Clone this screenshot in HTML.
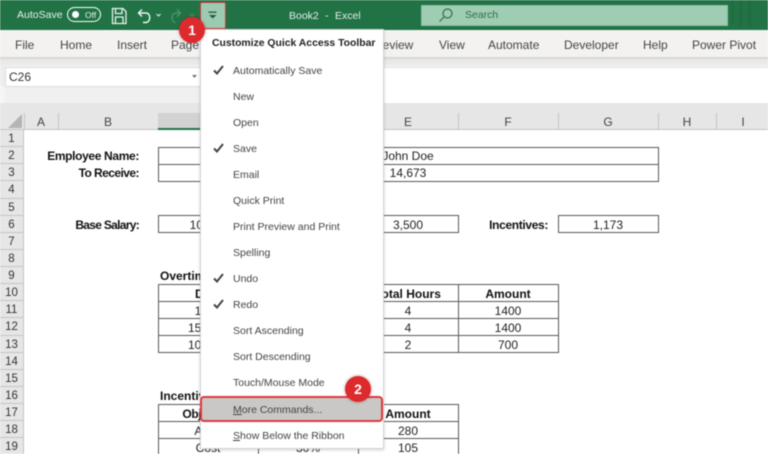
<!DOCTYPE html>
<html><head><meta charset="utf-8">
<style>
*{box-sizing:border-box}
html,body{margin:0;padding:0;width:768px;height:454px;overflow:hidden;background:#fff}
body{font-family:"Liberation Sans",sans-serif;position:relative}
#w{position:absolute;left:0;top:0;width:768px;height:454px;overflow:hidden;filter:blur(.45px)}
.a,.a *{position:absolute}
.t{position:absolute;white-space:nowrap;line-height:16px}
.rb{font-size:12px;color:#444;top:37px}
.h{top:114px;font-size:12px;color:#444;width:40px;text-align:center}
.r{position:absolute;left:0;width:24px;height:17.13px;background:#e6e6e6;border-bottom:1px solid #c4c4c4;border-right:1px solid #c4c4c4;font-size:11.5px;color:#333;text-align:center;line-height:18px}
.l{position:absolute;background:#5a5a5a}
.c{font-size:12px;color:#222;text-align:center;position:absolute;line-height:19px;white-space:nowrap}
.b{font-weight:bold;color:#111}
.lb{letter-spacing:-.35px}
.m{position:absolute;left:233px;font-size:10.5px;color:#444;line-height:16px;white-space:nowrap;top:0}
.k{position:absolute;left:212px;width:12px;height:12px}
.n{position:absolute;width:26px;height:26px;border-radius:50%;background:#dc2a2d;color:#fff;font:bold 14px/26px "Liberation Sans",sans-serif;text-align:center;box-shadow:0 0 3px rgba(120,0,0,.4)}
</style></head><body><div id="w">
<!-- title bar -->
<div style="position:absolute;left:0;top:0;width:768px;height:30px;background:#217346"></div>
<div class="t" style="left:17px;top:7px;font-size:10.5px;color:#e6f0ea">AutoSave</div>
<div style="position:absolute;left:67px;top:7px;width:34px;height:15px;border:1px solid #fff;border-radius:8px"></div>
<div style="position:absolute;left:72px;top:11px;width:7px;height:7px;border-radius:50%;background:#fff"></div>
<div class="t" style="left:85px;top:7px;font-size:8.5px;color:#e6f0ea">Off</div>
<svg style="position:absolute;left:0;top:0" width="240" height="30" fill="none">
<path d="M112.500 8.500H123L126 11.500V23.500H112.500Z M115.500 8.500V13.500H122V8.500 M115.500 23.500V17H123V23.500" stroke="#e8f1ec" stroke-width="1.300"/>
<path d="M142 9.500L138.500 13L142 16.500 M139 13H146C151 13 151 22 146 22.500H143" stroke="#f0f6f2" stroke-width="1.400"/>
<path d="M156.500 14L158.500 16L160.500 14" stroke="#e8f1ec" stroke-width="1"/>
<path d="M177 9.500L180.500 13L177 16.500 M180 13H176C171 13 171 21 175 22.500" stroke="#56926f" stroke-width="1.300"/>
<path d="M190 14L192 16L194 14" stroke="#56926f" stroke-width="1"/>
</svg>
<div style="position:absolute;left:200px;top:2px;width:26px;height:27px;background:#9dcbb1;border:1.500px solid #d8363a;border-radius:2px"></div>
<svg style="position:absolute;left:207px;top:10px" width="12" height="10"><rect x="1.500" y="1.500" width="8" height="1.300" fill="#1f5c3a"/><path d="M2 5H9.500L5.700 8.500Z" fill="#1f5c3a"/></svg>
<div class="t" style="left:289px;top:8px;font-size:10.5px;color:#e6f0ea">Book2</div>
<div class="t" style="left:325px;top:8px;font-size:10.5px;color:#e6f0ea">-</div>
<div class="t" style="left:335px;top:8px;font-size:10.5px;color:#e6f0ea">Excel</div>
<div style="position:absolute;left:421px;top:5px;width:307px;height:21px;background:#9fcdb3;border:1px solid #8cbfa3"></div>
<svg style="position:absolute;left:438px;top:7px" width="16" height="16" fill="none"><circle cx="9.500" cy="6.500" r="4.500" stroke="#2d6e4b" stroke-width="1.200"/><path d="M6 10L1.500 14.500" stroke="#2d6e4b" stroke-width="1.200"/></svg>
<div class="t" style="left:465px;top:7px;font-size:10.5px;color:#2f6e4c">Search</div>
<div style="position:absolute;left:731px;top:0;width:3px;height:24px;background:#1f6c41"></div>
<div style="position:absolute;left:739px;top:0;width:3px;height:27px;background:#1f6c41"></div>
<div style="position:absolute;left:748px;top:0;width:3px;height:27px;background:#1f6c41"></div>

<!-- ribbon -->
<div style="position:absolute;left:0;top:30px;width:768px;height:27px;background:#f3f2f1"></div>
<div style="position:absolute;left:0;top:57px;width:768px;height:9px;background:linear-gradient(#d2d1d0,#e9e8e7 35%,#eeeded)"></div>
<div class="t rb" style="left:15px">File</div>
<div class="t rb" style="left:60px">Home</div>
<div class="t rb" style="left:117px">Insert</div>
<div class="t rb" style="left:171px">Page Layout</div>
<div class="t rb" style="left:374px">Review</div>
<div class="t rb" style="left:439px">View</div>
<div class="t rb" style="left:488px">Automate</div>
<div class="t rb" style="left:564px">Developer</div>
<div class="t rb" style="left:643px">Help</div>
<div class="t rb" style="left:692px">Power Pivot</div>

<!-- formula bar -->
<div style="position:absolute;left:0;top:66px;width:768px;height:37px;background:#f5f5f5"></div>
<div style="position:absolute;left:5px;top:67px;width:763px;height:36px;background:#fff;border-top:1px solid #e2e2e2"></div>
<div style="position:absolute;left:0;top:66px;width:5px;height:20px;background:#eeeded"></div>
<div style="position:absolute;left:5px;top:67px;width:196px;height:20px;background:#fff;border:1px solid #dcdcdc"></div>
<div style="position:absolute;left:5px;top:87px;width:196px;height:16px;background:#f0f0f0"></div>
<div class="t" style="left:9px;top:69px;font-size:12px;color:#333">C26</div>
<svg style="position:absolute;left:192px;top:75px" width="6" height="4"><path d="M0 0H5L2.500 3Z" fill="#777"/></svg>

<!-- column headers -->
<div style="position:absolute;left:0;top:103px;width:768px;height:27px;background:#e6e6e6"></div>
<div style="position:absolute;left:0;top:129px;width:768px;height:1px;background:#c4c4c4"></div>
<svg style="position:absolute;left:8px;top:114px" width="14" height="14"><path d="M14 0V14H0Z" fill="#b5b5b5"/></svg>
<div style="position:absolute;left:158px;top:113px;width:100px;height:17px;background:#d2d2d2;border-bottom:2px solid #217346"></div>
<div class="l" style="left:24px;top:113px;width:1px;height:17px;background:#c4c4c4"></div>
<div class="l" style="left:58px;top:113px;width:1px;height:17px;background:#c4c4c4"></div>
<div class="l" style="left:458px;top:113px;width:1px;height:17px;background:#c4c4c4"></div>
<div class="l" style="left:558px;top:113px;width:1px;height:17px;background:#c4c4c4"></div>
<div class="l" style="left:658px;top:113px;width:1px;height:17px;background:#c4c4c4"></div>
<div class="l" style="left:716px;top:113px;width:1px;height:17px;background:#c4c4c4"></div>
<div class="t h" style="left:21px">A</div>
<div class="t h" style="left:88px">B</div>
<div class="t h" style="left:388px">E</div>
<div class="t h" style="left:488px">F</div>
<div class="t h" style="left:588px">G</div>
<div class="t h" style="left:667px">H</div>
<div class="t h" style="left:723px">I</div>

<!-- row headers -->
<div class="r" style="top:130px">1</div>
<div class="r" style="top:147.130px">2</div>
<div class="r" style="top:164.260px">3</div>
<div class="r" style="top:181.390px">4</div>
<div class="r" style="top:198.520px">5</div>
<div class="r" style="top:215.650px">6</div>
<div class="r" style="top:232.780px">7</div>
<div class="r" style="top:249.910px">8</div>
<div class="r" style="top:267.040px">9</div>
<div class="r" style="top:284.170px">10</div>
<div class="r" style="top:301.300px">11</div>
<div class="r" style="top:318.430px">12</div>
<div class="r" style="top:335.560px">13</div>
<div class="r" style="top:352.690px">14</div>
<div class="r" style="top:369.820px">15</div>
<div class="r" style="top:386.950px">16</div>
<div class="r" style="top:404.080px">17</div>
<div class="r" style="top:421.210px">18</div>
<div class="r" style="top:438.340px">19</div>

<!-- sheet boxes -->
<div class="a" style="left:158px;top:147px;width:501px;height:35px;border:1px solid #5a5a5a"><div class="l" style="left:0;top:16px;width:499px;height:1px"></div></div>
<div class="a" style="left:158px;top:215px;width:301px;height:18px;border:1px solid #5a5a5a"></div>
<div class="a" style="left:558px;top:215px;width:101px;height:18px;border:1px solid #5a5a5a"></div>
<div class="a" style="left:158px;top:284px;width:401px;height:69px;border:1px solid #5a5a5a">
<div class="l" style="left:0;top:16px;width:399px;height:1px"></div><div class="l" style="left:0;top:33px;width:399px;height:1px"></div><div class="l" style="left:0;top:50px;width:399px;height:1px"></div><div class="l" style="left:299px;top:0;width:1px;height:67px"></div></div>
<div class="a" style="left:158px;top:404px;width:301px;height:60px;border:1px solid #5a5a5a">
<div class="l" style="left:0;top:16px;width:299px;height:1px"></div><div class="l" style="left:0;top:33px;width:299px;height:1px"></div><div class="l" style="left:99px;top:0;width:1px;height:60px"></div><div class="l" style="left:199px;top:0;width:1px;height:60px"></div></div>

<!-- sheet text -->
<div class="c b lb" style="left:0;top:147px;width:139px;text-align:right">Employee Name:</div>
<div class="c b" style="left:0;top:164px;width:139px;text-align:right;letter-spacing:-.55px">To Receive:</div>
<div class="c b" style="left:0;top:216px;width:139px;text-align:right;letter-spacing:-.7px">Base Salary:</div>
<div class="c" style="left:158px;top:216px;width:100px">10,000</div>
<div class="c" style="left:358px;top:216px;width:100px">3,500</div>
<div class="c b lb" style="left:458px;top:216px;width:90px;text-align:right">Incentives:</div>
<div class="c" style="left:558px;top:216px;width:100px">1,173</div>
<div class="c" style="left:358px;top:147px;width:100px">John Doe</div>
<div class="c" style="left:358px;top:164px;width:100px">14,673</div>
<div class="c b" style="left:160px;top:267px">Overtime</div>
<div class="c b" style="left:158px;top:285px;width:100px">Date</div>
<div class="c" style="left:158px;top:302px;width:100px">1/1/2</div>
<div class="c" style="left:158px;top:319px;width:100px">15/1/22</div>
<div class="c" style="left:158px;top:336px;width:100px">10/1/22</div>
<div class="c b" style="left:358px;top:285px;width:100px">Total Hours</div>
<div class="c" style="left:358px;top:302px;width:100px">4</div>
<div class="c" style="left:358px;top:319px;width:100px">4</div>
<div class="c" style="left:358px;top:336px;width:100px">2</div>
<div class="c b" style="left:458px;top:285px;width:100px">Amount</div>
<div class="c" style="left:458px;top:302px;width:100px">1400</div>
<div class="c" style="left:458px;top:319px;width:100px">1400</div>
<div class="c" style="left:458px;top:336px;width:100px">700</div>
<div class="c b" style="left:160px;top:387px">Incentives</div>
<div class="c b" style="left:158px;top:405px;width:100px;letter-spacing:-.3px">Objective</div>
<div class="c" style="left:158px;top:422px;width:100px">Audit</div>
<div class="c" style="left:158px;top:439px;width:100px">Cost</div>
<div class="c" style="left:258px;top:439px;width:100px">30%</div>
<div class="c b" style="left:358px;top:405px;width:100px">Amount</div>
<div class="c" style="left:358px;top:422px;width:100px">280</div>
<div class="c" style="left:358px;top:439px;width:100px">105</div>

<!-- menu -->
<div style="position:absolute;left:200px;top:29px;width:184px;height:420px;background:#fff;border:1px solid #d4d4d4;box-shadow:0 1px 3px rgba(0,0,0,.18)"></div>
<div class="t" style="left:212px;top:36px;font-size:10.4px;font-weight:bold;color:#222">Customize Quick Access Toolbar</div>
<div class="m" style="top:63px">Automatically Save</div>
<div class="m" style="top:89px">New</div>
<div class="m" style="top:115px">Open</div>
<div class="m" style="top:141px">Save</div>
<div class="m" style="top:167px">Email</div>
<div class="m" style="top:193px">Quick Print</div>
<div class="m" style="top:219px">Print Preview and Print</div>
<div class="m" style="top:245px">Spelling</div>
<div class="m" style="top:271px">Undo</div>
<div class="m" style="top:297px">Redo</div>
<div class="m" style="top:323px">Sort Ascending</div>
<div class="m" style="top:349px">Sort Descending</div>
<div class="m" style="top:375px">Touch/Mouse Mode</div>
<div style="position:absolute;left:200px;top:396px;width:183px;height:26px;background:#c9c8c6;border:2px solid #e0383c;border-radius:4px"></div>
<div class="m" style="top:402px"><u>M</u>ore Commands...</div>
<div class="m" style="top:428px"><u>S</u>how Below the Ribbon</div>
<svg class="k" style="top:64px" viewBox="0 0 12 12" fill="none"><path d="M2 6.500L5 9.500L11 2" stroke="#444" stroke-width="2"/></svg>
<svg class="k" style="top:142px" viewBox="0 0 12 12" fill="none"><path d="M2 6.500L5 9.500L11 2" stroke="#444" stroke-width="2"/></svg>
<svg class="k" style="top:272px" viewBox="0 0 12 12" fill="none"><path d="M2 6.500L5 9.500L11 2" stroke="#444" stroke-width="2"/></svg>
<svg class="k" style="top:298px" viewBox="0 0 12 12" fill="none"><path d="M2 6.500L5 9.500L11 2" stroke="#444" stroke-width="2"/></svg>

<div class="n" style="left:179px;top:17px">1</div>
<div class="n" style="left:345px;top:376px">2</div>
</div></body></html>
